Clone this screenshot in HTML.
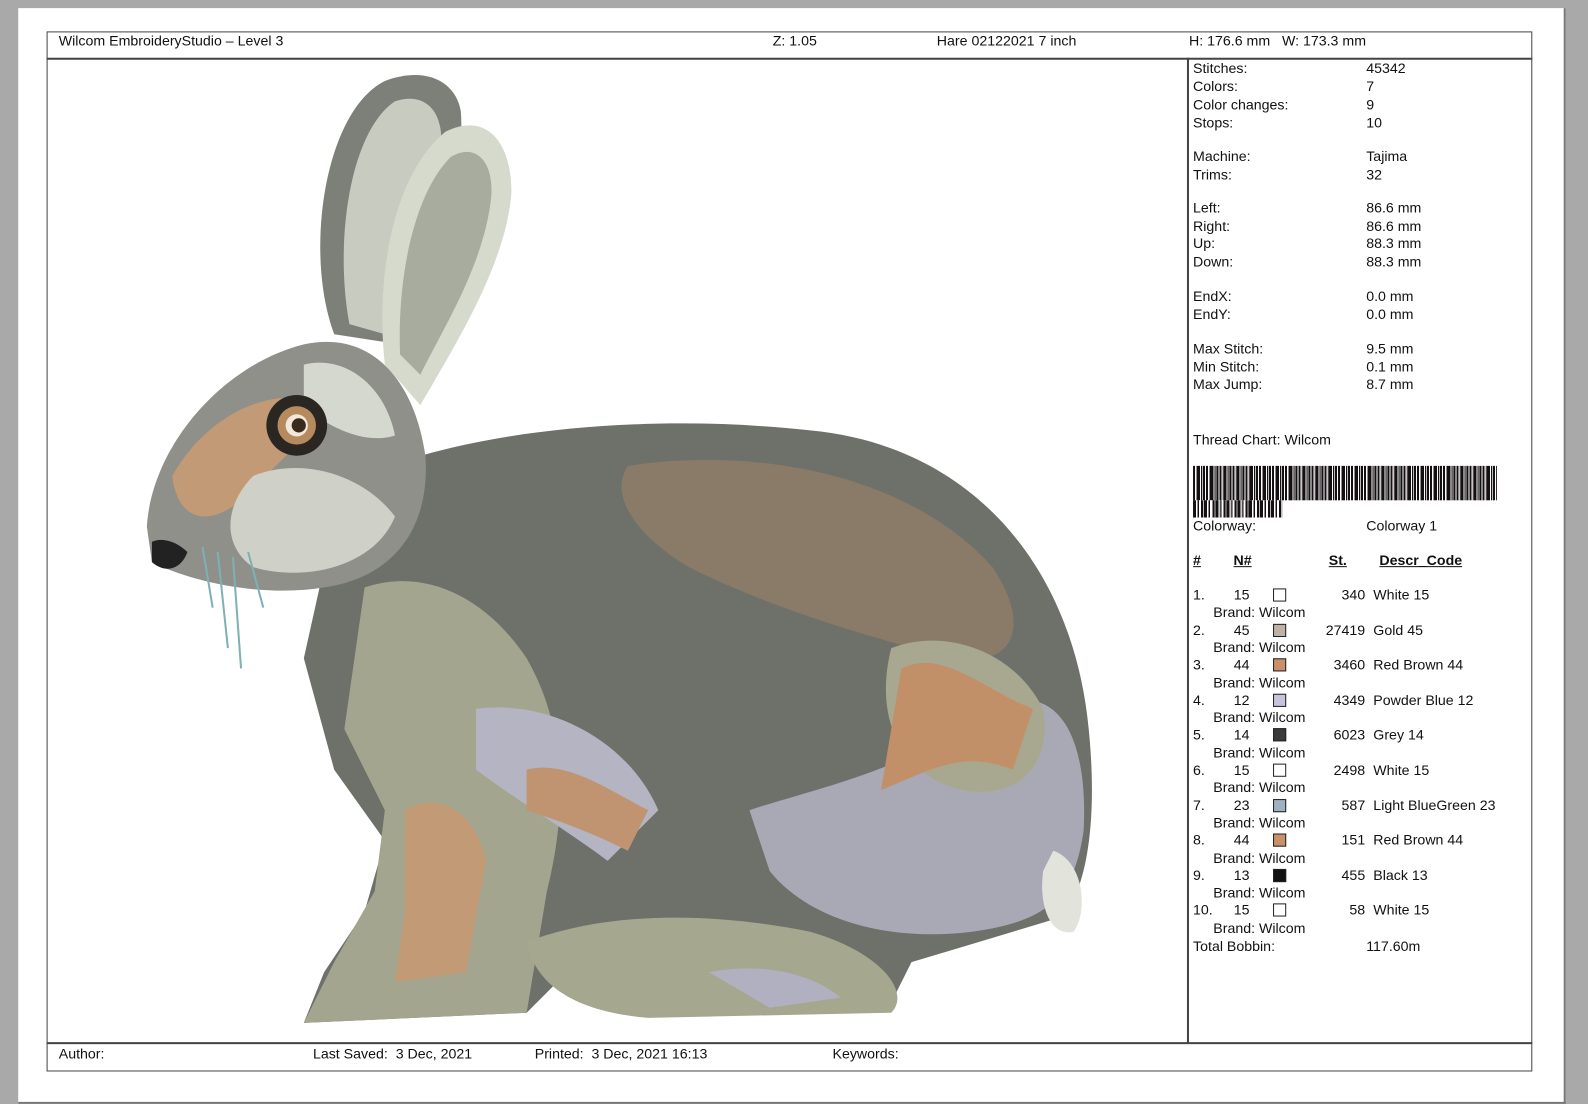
<!DOCTYPE html>
<html><head><meta charset="utf-8">
<style>
html,body{margin:0;padding:0;background:#a9a9a9;width:1588px;height:1103px;overflow:hidden}
#wrap{position:absolute;left:0;top:0;width:1568px;height:1089px;transform:scale(1.01276);transform-origin:0 0;font-family:"Liberation Sans",Arial,sans-serif;font-size:14px;color:#111}
#page{position:absolute;left:18px;top:8px;width:1526px;height:1080px;background:#fff;border-right:2px solid #777;border-bottom:2px solid #777}
.box{position:absolute;border:1.5px solid #444}
.t{position:absolute;white-space:pre;line-height:18px}
.sw{position:absolute;width:11px;height:11px;border:1px solid #222}
</style></head><body>
<div id="wrap">
<div id="page"></div>
<div class="box" style="left:46px;top:31px;width:1465px;height:1025px"></div>
<div style="position:absolute;left:46px;top:57px;width:1467px;height:1.5px;background:#444"></div>
<div style="position:absolute;left:46px;top:1029px;width:1467px;height:1.5px;background:#444"></div>
<div style="position:absolute;left:1172px;top:57px;width:1.5px;height:973px;background:#444"></div>

<div class="t" style="left:58px;top:31px">Wilcom EmbroideryStudio – Level 3</div>
<div class="t" style="left:763px;top:31px">Z: 1.05</div>
<div class="t" style="left:925px;top:31px">Hare 02122021 7 inch</div>
<div class="t" style="left:1174px;top:31px">H: 176.6 mm   W: 173.3 mm</div>

<div class="t" style="left:58px;top:1031px">Author:</div>
<div class="t" style="left:309px;top:1031px">Last Saved:  3 Dec, 2021</div>
<div class="t" style="left:528px;top:1031px">Printed:  3 Dec, 2021 16:13</div>
<div class="t" style="left:822px;top:1031px">Keywords:</div>

<!-- stats -->
<div class="t" style="left:1178px;top:58px">Stitches:
Colors:
Color changes:
Stops:</div>
<div class="t" style="left:1349px;top:58px">45342
7
9
10</div>
<div class="t" style="left:1178px;top:145px">Machine:
Trims:</div>
<div class="t" style="left:1349px;top:145px">Tajima
32</div>
<div class="t" style="left:1178px;top:197px;line-height:17.5px">Left:
Right:
Up:
Down:</div>
<div class="t" style="left:1349px;top:197px;line-height:17.5px">86.6 mm
86.6 mm
88.3 mm
88.3 mm</div>
<div class="t" style="left:1178px;top:284px;line-height:17.5px">EndX:
EndY:</div>
<div class="t" style="left:1349px;top:284px;line-height:17.5px">0.0 mm
0.0 mm</div>
<div class="t" style="left:1178px;top:336px;line-height:17.5px">Max Stitch:
Min Stitch:
Max Jump:</div>
<div class="t" style="left:1349px;top:336px;line-height:17.5px">9.5 mm
0.1 mm
8.7 mm</div>
<div class="t" style="left:1178px;top:425px">Thread Chart: Wilcom</div>

<div style="position:absolute;left:1178px;top:460px;width:300px;height:34px;background:repeating-linear-gradient(90deg,#111 0 2px,#fff 2px 3px,#9a8790 3px 4px,#111 4px 7px,#fff 7px 8px,#111 8px 9px,#c5b5bd 9px 10px,#111 10px 12px,#fff 12px 13px)"></div>
<div style="position:absolute;left:1178px;top:494px;width:88px;height:17px;background:repeating-linear-gradient(90deg,#111 0 3px,#fff 3px 4px,#9a8790 4px 5px,#111 5px 6px,#fff 6px 8px,#111 8px 10px,#c5b5bd 10px 11px)"></div>

<div class="t" style="left:1178px;top:510px">Colorway:</div>
<div class="t" style="left:1349px;top:510px">Colorway 1</div>
<div class="t" style="left:1178px;top:544px;font-weight:bold;text-decoration:underline">#</div>
<div class="t" style="left:1218px;top:544px;font-weight:bold;text-decoration:underline">N#</div>
<div class="t" style="left:1312px;top:544px;font-weight:bold;text-decoration:underline">St.</div>
<div class="t" style="left:1362px;top:544px;font-weight:bold;text-decoration:underline">Descr_Code</div>

<div id="rows"></div>
<div class="t" style="left:1178px;top:925px">Total Bobbin:</div>
<div class="t" style="left:1349px;top:925px">117.60m</div>

<!-- hare -->
<svg style="position:absolute;left:0;top:0" width="1170" height="1030" viewBox="0 0 1170 1030">
<!-- back ear -->
<path d="M330 330 C300 250 320 110 380 80 C420 65 450 80 455 110 C460 170 430 260 395 340 Z" fill="#7d8078"/>
<path d="M345 320 C330 240 345 130 390 100 C420 90 440 110 435 150 C425 220 400 280 380 330 Z" fill="#c8ccc0"/>
<!-- front ear -->
<path d="M380 360 C370 270 390 170 440 130 C480 110 505 140 505 190 C500 260 450 340 415 400 Z" fill="#d6dacd"/>
<path d="M395 350 C392 270 410 190 445 155 C470 140 488 160 485 195 C478 260 440 320 415 370 Z" fill="#a8ac9f"/>
<!-- body -->
<path d="M340 480 C430 430 620 405 800 425 C960 440 1060 560 1075 720 C1085 820 1070 880 1050 905 C1000 920 950 935 900 950 L880 990 L820 1000 L760 960 L640 930 L560 960 L520 1000 L300 1010 L320 960 L360 900 L380 830 L330 760 L300 650 L320 560 Z" fill="#6e716a"/>
<!-- brown back patch -->
<path d="M620 460 C750 440 900 470 980 560 C1020 620 1000 660 940 650 C860 630 760 600 680 560 C630 530 600 490 620 460 Z" fill="#8a7a68"/>
<!-- lavender belly / haunch -->
<path d="M740 800 C800 780 900 760 980 700 C1040 670 1075 720 1070 820 C1060 890 1030 910 960 920 C880 930 800 910 760 860 Z" fill="#a9a9b6"/>
<path d="M880 640 C930 620 1000 640 1030 700 C1040 760 1000 790 950 780 C900 770 860 720 880 640 Z" fill="#a8a890"/>
<path d="M890 660 C930 640 970 680 1020 700 L1000 760 C950 740 920 760 870 780 Z" fill="#c19069"/>
<!-- front leg / chest -->
<path d="M360 580 C420 560 480 590 520 650 C560 720 560 800 540 880 L520 1000 L300 1010 L330 950 L370 880 L380 800 L340 720 Z" fill="#a3a58e"/>
<path d="M400 800 C430 780 470 800 480 850 L460 960 L390 970 L400 900 Z" fill="#c39a76"/>
<path d="M470 700 C540 690 620 730 650 800 L600 850 C560 820 510 790 470 760 Z" fill="#b4b4c2"/>
<path d="M520 760 C560 750 600 780 640 800 L620 840 C580 820 550 810 520 800 Z" fill="#c09471"/>
<!-- hind foot -->
<path d="M520 930 C600 900 700 900 800 920 C870 940 900 980 880 1000 L640 1005 C580 1000 530 980 520 930 Z" fill="#a5a78f"/>
<path d="M700 960 C750 950 800 960 830 985 L760 995 Z" fill="#b0b0c0"/>
<!-- tail -->
<path d="M1040 840 C1070 850 1075 900 1060 920 C1040 925 1025 900 1030 860 Z" fill="#e2e4dc"/>
<!-- head -->
<path d="M145 520 C150 440 220 360 300 340 C370 325 410 380 420 450 C425 520 390 570 320 580 C260 590 190 575 150 555 Z" fill="#8f9089"/>
<path d="M170 470 C210 400 280 380 320 400 C300 440 260 470 230 500 C200 520 175 510 170 470 Z" fill="#c29a76"/>
<path d="M250 470 C300 450 360 470 390 510 C370 560 300 575 250 560 C220 540 220 500 250 470 Z" fill="#cfd1c8"/>
<path d="M300 360 C340 350 380 380 390 430 C360 440 320 420 300 400 Z" fill="#d5d8cf"/>
<path d="M150 535 C160 530 175 535 185 545 C180 560 165 568 150 555 Z" fill="#222"/>
<!-- eye -->
<circle cx="293" cy="420" r="30" fill="#2a2622"/>
<circle cx="293" cy="420" r="19" fill="#b48a5e"/>
<circle cx="293" cy="420" r="11" fill="#f0e8d8"/>
<circle cx="295" cy="420" r="7" fill="#3a2a1e"/>
<!-- whiskers -->
<path d="M200 540 L210 600 M215 545 L225 640 M230 550 L238 660 M245 545 L260 600" stroke="#7fb0b5" stroke-width="2" fill="none"/>
</svg>
</div>
<script>
var d=[["1.","15","#fff","340","White 15"],["2.","45","#bdb2a6","27419","Gold 45"],["3.","44","#c9906a","3460","Red Brown 44"],["4.","12","#c6c4dc","4349","Powder Blue 12"],["5.","14","#3a3a3a","6023","Grey 14"],["6.","15","#fff","2498","White 15"],["7.","23","#9fb0c0","587","Light BlueGreen 23"],["8.","44","#c9906a","151","Red Brown 44"],["9.","13","#111","455","Black 13"],["10.","15","#fff","58","White 15"]];
var h="";for(var i=0;i<d.length;i++){var y=578+i*34.6;
h+='<div class="t" style="left:1178px;top:'+y+'px">'+d[i][0]+'</div>';
h+='<div class="t" style="left:1210px;top:'+y+'px;width:32px;text-align:center">'+d[i][1]+'</div>';
h+='<div class="sw" style="left:1257px;top:'+(y+3)+'px;background:'+d[i][2]+'"></div>';
h+='<div class="t" style="left:1290px;top:'+y+'px;width:58px;text-align:right">'+d[i][3]+'</div>';
h+='<div class="t" style="left:1356px;top:'+y+'px">'+d[i][4]+'</div>';
h+='<div class="t" style="left:1198px;top:'+(y+17.3)+'px">Brand: Wilcom</div>';}
document.getElementById("rows").innerHTML=h;
</script>
</body></html>
